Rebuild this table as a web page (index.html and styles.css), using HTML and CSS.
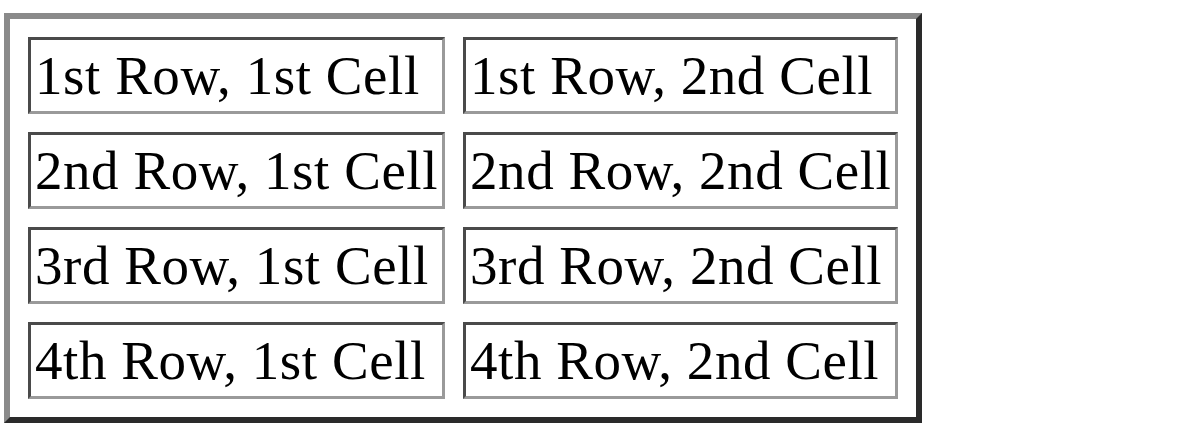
FILE: index.html
```html
<!DOCTYPE html>
<html>
<head>
<meta charset="utf-8">
<link rel="stylesheet" href="styles.css">
</head>
<body>
<table class="grid">
  <tr><td class="c1">1st Row, 1st Cell</td><td class="c2">1st Row, 2nd Cell</td></tr>
  <tr><td class="c1">2nd Row, 1st Cell</td><td class="c2">2nd Row, 2nd Cell</td></tr>
  <tr><td class="c1">3rd Row, 1st Cell</td><td class="c2">3rd Row, 2nd Cell</td></tr>
  <tr><td class="c1">4th Row, 1st Cell</td><td class="c2">4th Row, 2nd Cell</td></tr>
</table>
</body>
</html>
```
FILE: styles.css
```css
html, body {
  margin: 0;
  background: #ffffff;
}
body {
  padding: 13px 0 0 4px;
  font-family: "Liberation Serif", "Times New Roman", serif;
}
.grid {
  border-collapse: separate;
  border-spacing: 18px;
  border-style: solid;
  border-width: 6px;
  border-color: #8a8a8a #2a2a2a #2a2a2a #8a8a8a;
  font-size: 55px;
  letter-spacing: 0.55px;
  color: #000;
}
.grid td {
  border-style: solid;
  border-width: 3px;
  border-color: #4a4a4a #9a9a9a #9a9a9a #4a4a4a;
  padding: 4px 4px;
  white-space: nowrap;
  line-height: normal;
}
```
